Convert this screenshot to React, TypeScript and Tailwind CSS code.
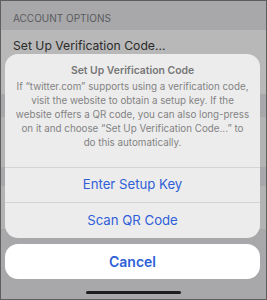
import React from 'react';

const font = "font-['Inter','Liberation_Sans',sans-serif]";

export default function App() {
  return (
    <div className={`relative w-[267px] h-[300px] overflow-hidden bg-[#a8a8aa] ${font}`}>
      {/* Dimmed settings list behind the sheet */}
      <div className="flex flex-col">
        <div className="h-[30px] px-[13px] pt-[11px] text-[10px] leading-[14px] text-[#5a5a5e]">
          ACCOUNT OPTIONS
        </div>
        <div className="h-[64px] bg-[#b8b8b8] px-[13px] pt-[7px] text-[12.2px] leading-[18px] text-[#2b2b2b]">
          Set Up Verification Code...
        </div>
        <div className="h-[23px]" />
        <div className="h-[51px] bg-[#b3b3b3] border-b border-[#a6a6a6]" />
        <div className="h-[18px]" />
        <div className="h-[44px] bg-[#b3b3b3] border-b border-[#a6a6a6]" />
      </div>

      {/* Action sheet */}
      <div className="absolute left-[5px] top-[54px] w-[255px] flex flex-col gap-[6px]">
        <div className="rounded-[13px] bg-[#ececec] overflow-hidden">
          <div className="px-[6px] pt-[9px] pb-[17px] text-center">
            <div className="text-[10.4px] leading-[16px] font-semibold text-[#777777]">
              Set Up Verification Code
            </div>
            <p className="mt-[1px] text-[9.8px] leading-[14px] text-[#838383] whitespace-nowrap">
              If “twitter.com” supports using a verification code,<br />
              visit the website to obtain a setup key. If the<br />
              website offers a QR code, you can also long-press<br />
              on it and choose “Set Up Verification Code...” to<br />
              do this automatically.
            </p>
          </div>
          <div className="h-[35px] border-t border-[#d4d4d4] flex items-center justify-center text-[13.2px] text-[#2f5fd8]">
            Enter Setup Key
          </div>
          <div className="h-[36px] border-t border-[#d4d4d4] flex items-center justify-center text-[13.2px] text-[#2f5fd8]">
            Scan QR Code
          </div>
        </div>
        <div className="h-[35px] rounded-[13px] bg-white flex items-center justify-center text-[14px] font-semibold text-[#2f5fd8]">
          Cancel
        </div>
      </div>

      {/* Home indicator */}
      <div className="absolute left-[86px] top-[291px] w-[95px] h-[3px] rounded-full bg-[#1e1e1e]" />

      {/* Screenshot frame */}
      <div className="absolute inset-0 border border-[#5e5e5e] pointer-events-none" />
    </div>
  );
}
